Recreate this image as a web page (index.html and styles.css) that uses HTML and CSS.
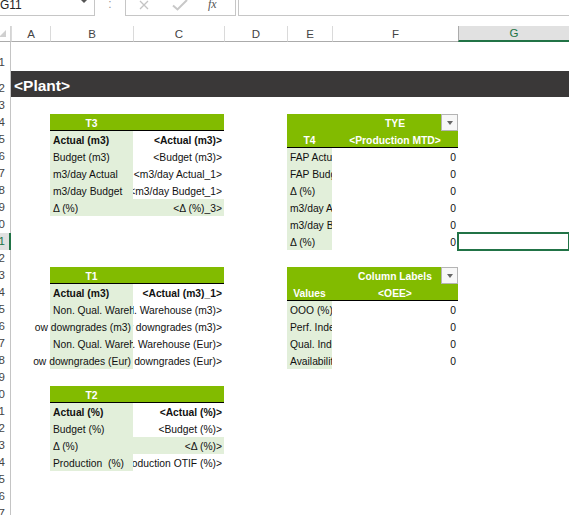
FILE: index.html
```html
<!DOCTYPE html>
<html lang="en">
<head>
    <meta charset="UTF-8">
    <meta name="viewport" content="width=device-width, initial-scale=1.0">
    <title>Plant - Sheet</title>
    <link rel="stylesheet" href="styles.css">
</head>
<body>
    <div class="formula-bar">
        <div class="name-box">
            <span class="name-text">G11</span>
            <span class="name-arrow"></span>
        </div>
        <div class="fb-colon">:</div>
        <div class="fb-tools">
            <svg class="ico-x" viewBox="0 0 10 10"><path d="M1 1L9 9M9 1L1 9"/></svg>
            <svg class="ico-check" viewBox="0 0 16 12"><path d="M1 6.5L5.5 10.5L15 1"/></svg>
            <span class="ico-fx">fx</span>
        </div>
        <div class="fb-input"></div>
    </div>

    <div class="sheet">
        <div class="corner"></div>
        <div class="col-head">A</div>
        <div class="col-head">B</div>
        <div class="col-head">C</div>
        <div class="col-head">D</div>
        <div class="col-head">E</div>
        <div class="col-head">F</div>
        <div class="col-head active">G</div>

        <div class="row-head">1</div>
        <div class="row-head">2</div>
        <div class="row-head">3</div>
        <div class="row-head">4</div>
        <div class="row-head">5</div>
        <div class="row-head">6</div>
        <div class="row-head">7</div>
        <div class="row-head">8</div>
        <div class="row-head">9</div>
        <div class="row-head">10</div>
        <div class="row-head active">11</div>
        <div class="row-head">12</div>
        <div class="row-head">13</div>
        <div class="row-head">14</div>
        <div class="row-head">15</div>
        <div class="row-head">16</div>
        <div class="row-head">17</div>
        <div class="row-head">18</div>
        <div class="row-head">19</div>
        <div class="row-head">20</div>
        <div class="row-head">21</div>
        <div class="row-head">22</div>
        <div class="row-head">23</div>
        <div class="row-head">24</div>
        <div class="row-head">25</div>
        <div class="row-head">26</div>
        <div class="row-head">27</div>

        <div class="plant-bar">&lt;Plant&gt;</div>

        <!-- T3 -->
        <div class="tbl tbl-bc t3">
            <div class="c hd line">T3</div>
            <div class="c hd line"></div>
            <div class="c lbl b">Actual (m3)</div>
            <div class="c v b">&lt;Actual (m3)&gt;</div>
            <div class="c lbl">Budget (m3)</div>
            <div class="c v">&lt;Budget (m3)&gt;</div>
            <div class="c lbl">m3/day Actual</div>
            <div class="c v">&lt;m3/day Actual_1&gt;</div>
            <div class="c lbl">m3/day Budget</div>
            <div class="c v">&lt;m3/day Budget_1&gt;</div>
            <div class="c lbl">Δ (%)</div>
            <div class="c v lbl">&lt;Δ (%)_3&gt;</div>
        </div>

        <!-- T1 -->
        <div class="tbl tbl-bc t1">
            <div class="c hd line">T1</div>
            <div class="c hd line"></div>
            <div class="c lbl b">Actual (m3)</div>
            <div class="c v b">&lt;Actual (m3)_1&gt;</div>
            <div class="c lbl">Non. Qual. Warehouse (m3)</div>
            <div class="c v">&lt;Non. Qual. Warehouse (m3)&gt;</div>
            <div class="c lbl spill">ow downgrades (m3)</div>
            <div class="c v">&lt;Low downgrades (m3)&gt;</div>
            <div class="c lbl">Non. Qual. Warehouse (Eur)</div>
            <div class="c v">&lt;Non. Qual. Warehouse (Eur)&gt;</div>
            <div class="c lbl spill">ow downgrades (Eur)</div>
            <div class="c v">&lt;Low downgrades (Eur)&gt;</div>
        </div>

        <!-- T2 -->
        <div class="tbl tbl-bc t2">
            <div class="c hd line">T2</div>
            <div class="c hd line"></div>
            <div class="c lbl b">Actual (%)</div>
            <div class="c v b">&lt;Actual (%)&gt;</div>
            <div class="c lbl">Budget (%)</div>
            <div class="c v">&lt;Budget (%)&gt;</div>
            <div class="c lbl">Δ (%)</div>
            <div class="c v lbl">&lt;Δ (%)&gt;</div>
            <div class="c lbl">Production &nbsp;(%)</div>
            <div class="c v">&lt;Production OTIF (%)&gt;</div>
        </div>

        <!-- T4 pivot -->
        <div class="tbl tbl-ef t4">
            <div class="c hd"></div>
            <div class="c hd drop">TYE<span class="dd"></span></div>
            <div class="c hd line">T4</div>
            <div class="c hd line">&lt;Production MTD&gt;</div>
            <div class="c lbl">FAP Actual</div>
            <div class="c v">0</div>
            <div class="c lbl">FAP Budget</div>
            <div class="c v">0</div>
            <div class="c lbl">Δ (%)</div>
            <div class="c v">0</div>
            <div class="c lbl">m3/day Actual</div>
            <div class="c v">0</div>
            <div class="c lbl">m3/day Budget</div>
            <div class="c v">0</div>
            <div class="c lbl">Δ (%)</div>
            <div class="c v">0</div>
        </div>

        <!-- OEE pivot -->
        <div class="tbl tbl-ef oee">
            <div class="c hd"></div>
            <div class="c hd drop">Column Labels<span class="dd"></span></div>
            <div class="c hd line">Values</div>
            <div class="c hd line">&lt;OEE&gt;</div>
            <div class="c lbl">OOO (%)</div>
            <div class="c v">0</div>
            <div class="c lbl">Perf. Index</div>
            <div class="c v">0</div>
            <div class="c lbl">Qual. Index</div>
            <div class="c v">0</div>
            <div class="c lbl">Availability</div>
            <div class="c v">0</div>
        </div>

        <div class="sel-cell"></div>
    </div>
</body>
</html>
```

FILE: styles.css
```css
:root {
    --green: #82bb00;
    --green-light: #e2efda;
    --excel: #217346;
    --line: #c6c6c6;
}

* {
    margin: 0;
    padding: 0;
    box-sizing: border-box;
}

body {
    background: #fff;
    width: 569px;
    height: 515px;
    overflow: hidden;
    font-family: "Liberation Sans", Arial, sans-serif;
    color: #000;
}

/* formula bar (top is cut off) */
.formula-bar {
    display: flex;
    height: 22px;
    margin-top: -6px;
}

.name-box {
    width: 95px;
    display: flex;
    align-items: center;
    justify-content: space-between;
    padding-right: 6px;
    border-right: 1px solid var(--line);
    border-bottom: 1px solid var(--line);
    font-size: 12px;
    color: #222;
}

.name-arrow {
    width: 0;
    height: 0;
    border-left: 4px solid transparent;
    border-right: 4px solid transparent;
    border-top: 4px solid #555;
    margin-top: -8px;
}

.fb-colon {
    width: 30px;
    text-align: center;
    font-size: 12px;
    line-height: 20px;
    color: #999;
}

.fb-tools {
    width: 111px;
    display: flex;
    align-items: center;
    border: 1px solid var(--line);
    border-top: none;
}

.ico-x {
    width: 10px;
    height: 10px;
    margin-left: 13px;
    stroke: #c4c4c4;
    stroke-width: 1.3;
    fill: none;
}

.ico-check {
    width: 16px;
    height: 12px;
    margin-left: 23px;
    stroke: #c8c8c8;
    stroke-width: 2;
    fill: none;
}

.ico-fx {
    margin-left: 20px;
    font-family: "Liberation Serif", serif;
    font-style: italic;
    font-size: 12px;
    color: #555;
}

.fb-input {
    flex: 1;
    margin-left: 2px;
    border-left: 1px solid var(--line);
    border-bottom: 1px solid var(--line);
}

/* sheet grid */
.sheet {
    display: grid;
    grid-template-columns: 11px 39px 83px 91px 63px 45px 126px 111px;
    grid-template-rows: 16px 29px 26px repeat(25, 17px);
    margin-top: 10px;
}

.corner {
    display: flex;
    align-items: flex-end;
    justify-content: flex-end;
    padding: 0 4px 4px 0;
    border-right: 1px solid #d4d4d4;
    border-bottom: 1px solid #ababab;
}

.corner::after {
    content: '';
    border-left: 7px solid transparent;
    border-bottom: 7px solid #d0d0d0;
}

.col-head {
    display: flex;
    align-items: center;
    justify-content: center;
    border-left: 1px solid #dadada;
    border-bottom: 1px solid #ababab;
    font-size: 11.5px;
    color: #444;
}

.col-head.active {
    background: #e1e1e1;
    color: var(--excel);
    border-left-color: #ababab;
    border-bottom: 2px solid var(--excel);
}

.row-head {
    grid-column: 1;
    display: flex;
    align-items: flex-end;
    justify-content: flex-end;
    padding: 0 5px 2px 0;
    line-height: 13px;
    font-size: 11.5px;
    color: #444;
    overflow: hidden;
    white-space: nowrap;
    border-right: 1px solid #c4c4c4;
}

.row-head.active {
    background: #e1e1e1;
    color: var(--excel);
    border-right: 2px solid var(--excel);
    padding-right: 4px;
}

.plant-bar {
    grid-column: 2 / -1;
    grid-row: 3;
    display: flex;
    align-items: center;
    padding: 3px 0 0 3px;
    background: #3a3838;
    color: #fff;
    font-weight: bold;
    font-size: 15.5px;
}

/* tables */
.tbl {
    display: grid;
    grid-auto-rows: 17px;
    font-size: 10.3px;
}

.tbl-bc {
    grid-column: 3 / 5;
    grid-template-columns: 83px 91px;
}

.tbl-ef {
    grid-column: 6 / 8;
    grid-template-columns: 45px 126px;
}

.t3 { grid-row: 5 / 11; }
.t1 { grid-row: 14 / 20; }
.t2 { grid-row: 21 / 26; }
.t4 { grid-row: 5 / 13; }
.oee { grid-row: 14 / 20; }

.c {
    display: flex;
    align-items: flex-start;
    padding: 3px 3px 0;
    line-height: 14px;
    white-space: nowrap;
    overflow: hidden;
    color: #111;
}

.c.b {
    font-weight: bold;
}

.c.lbl {
    background: var(--green-light);
}

.c.v {
    justify-content: flex-end;
    padding-right: 2px;
}

.c.spill {
    justify-content: flex-end;
    overflow: visible;
    padding-right: 2px;
}

.c.hd {
    justify-content: center;
    background: var(--green);
    color: #fff;
    font-weight: bold;
}

.c.hd.line {
    border-bottom: 1px solid #000;
}

.c.drop {
    position: relative;
}

.dd {
    position: absolute;
    top: 0;
    right: 0;
    width: 17px;
    height: 17px;
    display: flex;
    align-items: center;
    justify-content: center;
    background: #f7f7f7;
    border: 1px solid #b4b4b4;
}

.dd::after {
    content: '';
    border-left: 3.5px solid transparent;
    border-right: 3.5px solid transparent;
    border-top: 4px solid #666;
}

.sel-cell {
    grid-column: 8;
    grid-row: 12;
    margin: -1px -1px -1px -1px;
    border: 2px solid var(--excel);
}
```
